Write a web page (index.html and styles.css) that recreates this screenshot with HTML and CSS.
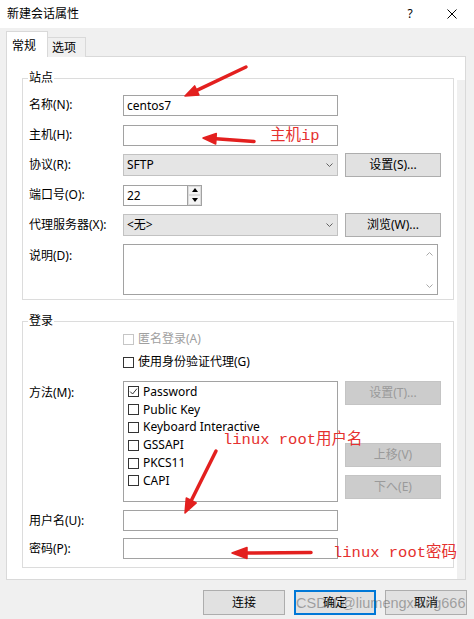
FILE: index.html
```html
<!DOCTYPE html>
<html lang="zh-CN">
<head>
    <meta charset="UTF-8">
    <meta name="viewport" content="width=device-width, initial-scale=1.0">
    <title>新建会话属性</title>
    <link rel="stylesheet" href="styles.css">
</head>
<body>
    <div class="dialog">
        <div class="titlebar">
            <span class="title">新建会话属性</span>
            <span class="help">?</span>
            <svg class="close" viewBox="0 0 10 10"><path d="M0.5 0.5 L9.5 9.5 M9.5 0.5 L0.5 9.5" /></svg>
        </div>

        <div class="tabs">
            <div class="tab active">常规</div>
            <div class="tab">选项</div>
        </div>

        <div class="panel">
            <div class="page">
                <!-- 站点 -->
                <fieldset class="group site">
                    <legend>站点</legend>
                    <div class="row">
                        <label>名称(N):</label>
                        <input class="field" type="text" value="centos7">
                    </div>
                    <div class="row">
                        <label>主机(H):</label>
                        <input class="field" type="text" value="">
                    </div>
                    <div class="row">
                        <label>协议(R):</label>
                        <div class="select">
                            <span>SFTP</span>
                            <svg class="chevron" viewBox="0 0 7 4"><path d="M0.5 0.5 L3.5 3.5 L6.5 0.5" /></svg>
                        </div>
                        <button class="btn">设置(S)...</button>
                    </div>
                    <div class="row">
                        <label>端口号(O):</label>
                        <div class="spin">
                            <input class="field" type="text" value="22">
                            <div class="spin-btns">
                                <span class="spin-up"><svg viewBox="0 0 6 4"><path d="M0 4 L3 0 L6 4 Z" /></svg></span>
                                <span class="spin-down"><svg viewBox="0 0 6 4"><path d="M0 0 L6 0 L3 4 Z" /></svg></span>
                            </div>
                        </div>
                    </div>
                    <div class="row">
                        <label>代理服务器(X):</label>
                        <div class="select">
                            <span>&lt;无&gt;</span>
                            <svg class="chevron" viewBox="0 0 7 4"><path d="M0.5 0.5 L3.5 3.5 L6.5 0.5" /></svg>
                        </div>
                        <button class="btn">浏览(W)...</button>
                    </div>
                    <div class="row desc">
                        <label>说明(D):</label>
                        <div class="memo">
                            <div class="memo-bar">
                                <svg viewBox="0 0 7 4"><path d="M0.5 3.5 L3.5 0.5 L6.5 3.5" /></svg>
                                <svg viewBox="0 0 7 4"><path d="M0.5 0.5 L3.5 3.5 L6.5 0.5" /></svg>
                            </div>
                        </div>
                    </div>
                </fieldset>

                <!-- 登录 -->
                <fieldset class="group login">
                    <legend>登录</legend>
                    <div class="check-row disabled">
                        <span class="box"></span>匿名登录(A)
                    </div>
                    <div class="check-row agent">
                        <span class="box"></span>使用身份验证代理(G)
                    </div>
                    <div class="row method">
                        <label>方法(M):</label>
                        <div class="list">
                            <div class="item"><span class="box"><svg viewBox="0 0 9 9"><path d="M1.2 4.6 L3.6 7 L8 1.6" /></svg></span>Password</div>
                            <div class="item"><span class="box"></span>Public Key</div>
                            <div class="item"><span class="box"></span>Keyboard Interactive</div>
                            <div class="item"><span class="box"></span>GSSAPI</div>
                            <div class="item"><span class="box"></span>PKCS11</div>
                            <div class="item"><span class="box"></span>CAPI</div>
                        </div>
                        <div class="side">
                            <button class="btn" disabled>设置(T)...</button>
                            <button class="btn move-up" disabled>上移(V)</button>
                            <button class="btn move-down" disabled>下へ(E)</button>
                        </div>
                    </div>
                    <div class="row short user">
                        <label>用户名(U):</label>
                        <input class="field" type="text" value="">
                    </div>
                    <div class="row short pass">
                        <label>密码(P):</label>
                        <input class="field" type="password" value="">
                    </div>
                </fieldset>
            </div>
            <div class="gutter"></div>
        </div>

        <div class="footer">
            <button class="btn">连接</button>
            <button class="btn default">确定</button>
            <button class="btn">取消</button>
        </div>

        <!-- красные пометки поверх окна -->
        <svg class="marks" viewBox="0 0 474 619">
            <g class="arrow">
                <path d="M246 67 L196.8 90.4" />
                <polygon points="185,96 198.9,94.9 194.6,85.9" />
            </g>
            <g class="arrow">
                <path d="M254 141.5 L216 138.8" />
                <polygon points="203,138 216.3,133.5 215.7,144" />
            </g>
            <g class="arrow">
                <path d="M216 451 L191.3 500.5" />
                <polygon points="185,513 196.2,502.9 186.3,498" />
            </g>
            <g class="arrow">
                <path d="M311 552.5 L246 553" />
                <polygon points="232,553 247,547.5 247,558.5" />
            </g>
        </svg>
        <span class="note note-host">主机ip</span>
        <span class="note note-user">linux root用户名</span>
        <span class="note note-pass">linux root密码</span>
        <span class="watermark">CSDN @liumengxiang666</span>
    </div>
</body>
</html>
```

FILE: styles.css
```css
* {
    box-sizing: border-box;
}
body {
    margin: 0;
    background-color: #f0f0f0;
    font-family: "Noto Sans", "Noto Sans CJK SC", sans-serif;
    font-size: 12px;
    line-height: 16px;
    color: #000;
}
.dialog {
    position: relative;
    width: 474px;
    height: 619px;
    background-color: #f0f0f0;
    overflow: hidden;
}

/* заголовок окна */
.titlebar {
    display: flex;
    align-items: center;
    height: 28px;
    padding-left: 7px;
    background-color: #fff;
}
.title {
    flex: 1;
}
.help {
    width: 14px;
    text-align: center;
}
.close {
    width: 10px;
    height: 10px;
    margin: 0 17px 0 30px;
    fill: none;
    stroke: #000;
    stroke-width: 1;
}

/* вкладки */
.tabs {
    display: flex;
    align-items: flex-end;
    height: 29px;
    padding: 3px 0 0 6px;
}
.tab {
    width: 38px;
    height: 20px;
    padding: 2px 0 0 4px;
    border: 1px solid #d9d9d9;
    border-left: none;
    border-bottom: none;
    background-color: #f0f0f0;
}
.tab.active {
    position: relative;
    z-index: 1;
    width: 42px;
    height: 26px;
    padding: 6px 0 0 5px;
    border-left: 1px solid #d9d9d9;
    background-color: #fff;
}
.panel {
    display: flex;
    width: 460px;
    height: 524px;
    margin: -1px 0 0 6px;
    border: 1px solid #d9d9d9;
    background-color: #fff;
}
.page {
    width: 450px;
    padding-left: 15px;
}
.gutter {
    width: 8px;
    margin-top: 23px;
    background-color: #f0f0f0;
}

/* группы */
.group {
    width: 432px;
    min-width: 0;
    margin: 13px 0 0;
    padding: 4px 0 4px 6px;
    border: 1px solid #dcdcdc;
}
.group legend {
    padding: 0 1px;
    margin-left: -1px;
    line-height: 16px;
}
.login {
    padding: 0 0 8px 6px;
}
.row {
    display: grid;
    grid-template-columns: 87px 215px 96px;
    column-gap: 7px;
    align-items: center;
    height: 30px;
}
.row.desc {
    align-items: start;
    height: auto;
}
.row.desc label {
    padding-top: 8px;
}
.field {
    width: 100%;
    height: 21px;
    margin: 0;
    padding: 0 3px;
    border: 1px solid #a2a2a2;
    background-color: #fff;
    font: inherit;
    color: #000;
    outline: none;
}
.select {
    display: flex;
    align-items: center;
    height: 22px;
    padding: 0 4px 0 3px;
    border: 1px solid #c2c2c2;
    background-color: #e5e5e5;
}
.select span {
    flex: 1;
}
.chevron {
    width: 7px;
    height: 4px;
    fill: none;
    stroke: #606060;
    stroke-width: 1;
}
.btn {
    height: 24px;
    margin: 0;
    padding: 0;
    border: 1px solid #adadad;
    background-color: #e1e1e1;
    font: inherit;
    color: #000;
}
.btn:disabled {
    border-color: #c4c4c4;
    background-color: #cccccc;
    color: #9a9a9a;
}
.spin {
    display: flex;
    width: 79px;
}
.spin .field {
    width: 65px;
}
.spin-btns {
    display: flex;
    flex-direction: column;
    width: 14px;
    height: 21px;
    border: 1px solid #a2a2a2;
    border-left: none;
}
.spin-btns span {
    display: flex;
    flex: 1;
    align-items: center;
    justify-content: center;
    border: 1px solid #dcdcdc;
    background-color: #f4f4f4;
}
.spin-btns svg {
    width: 6px;
    height: 4px;
    fill: #000;
}
.memo {
    grid-column: 2 / 4;
    display: flex;
    justify-content: flex-end;
    width: 315px;
    height: 51px;
    margin-top: 4px;
    border: 1px solid #a2a2a2;
}
.memo-bar {
    display: flex;
    flex-direction: column;
    justify-content: space-between;
    align-items: center;
    width: 16px;
    padding: 7px 0 6px;
}
.memo-bar svg {
    width: 7px;
    height: 4px;
    fill: none;
    stroke: #a8a8a8;
    stroke-width: 1;
}

/* флажки */
.check-row {
    display: flex;
    align-items: center;
    height: 20px;
    padding-left: 94px;
}
.check-row.agent {
    margin-top: 3px;
}
.box {
    display: flex;
    align-items: center;
    justify-content: center;
    width: 11px;
    height: 11px;
    margin-right: 4px;
    border: 1px solid #333;
    background-color: #fff;
}
.box svg {
    width: 9px;
    height: 9px;
    fill: none;
    stroke: #333;
    stroke-width: 1;
}
.check-row.disabled {
    color: #a0a0a0;
}
.check-row.disabled .box {
    border-color: #c6c6c6;
}
.row.method {
    align-items: start;
    height: auto;
    margin-top: 9px;
}
.row.method label {
    padding-top: 3px;
    line-height: 18px;
}
.list {
    height: 121px;
    padding: 1px 0 0 4px;
    border: 1px solid #a2a2a2;
}
.item {
    display: flex;
    align-items: center;
    height: 17.8px;
}
.side {
    display: flex;
    flex-direction: column;
}
.move-up {
    margin-top: 38px;
}
.move-down {
    margin-top: 8px;
}
.row.short {
    height: 21px;
}
.row.user {
    margin-top: 8px;
}
.row.pass {
    margin-top: 7px;
}

/* кнопки внизу */
.footer {
    display: flex;
    justify-content: flex-end;
    gap: 9px;
    padding: 10px 7px 0 0;
}
.footer .btn {
    width: 82px;
    height: 25px;
}
.footer .default {
    border-color: #0078d7;
    box-shadow: inset 0 0 0 1px #0078d7;
}

/* пометки */
.marks {
    position: absolute;
    left: 0;
    top: 0;
    width: 474px;
    height: 619px;
    pointer-events: none;
}
.arrow path {
    fill: none;
    stroke: #e3201f;
    stroke-width: 3.5;
    stroke-linecap: round;
}
.arrow polygon {
    fill: #e3201f;
    stroke: #e3201f;
    stroke-width: 1.5;
    stroke-linejoin: round;
}
.note {
    position: absolute;
    font-family: "Liberation Mono", "Noto Sans CJK SC", monospace;
    font-size: 15.5px;
    line-height: 20px;
    color: #e5302e;
    white-space: nowrap;
}
.note-host {
    left: 270px;
    top: 126px;
}
.note-user {
    left: 223px;
    top: 430px;
}
.note-pass {
    left: 333px;
    top: 543px;
}
.watermark {
    position: absolute;
    left: 296px;
    top: 594px;
    font-family: "Liberation Sans", sans-serif;
    font-size: 14.5px;
    line-height: 18px;
    color: rgba(90, 90, 90, 0.5);
    white-space: nowrap;
}
```
